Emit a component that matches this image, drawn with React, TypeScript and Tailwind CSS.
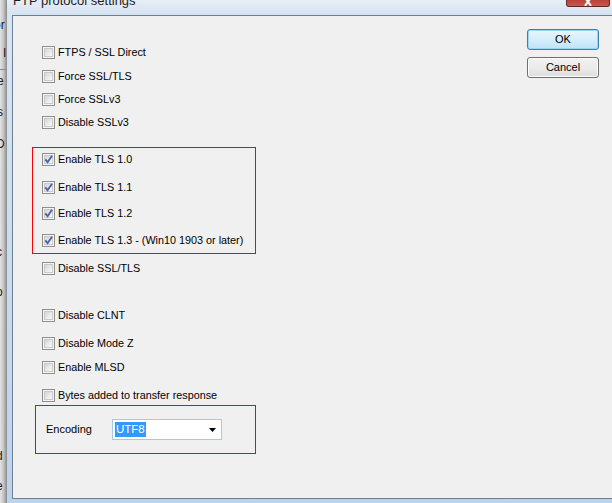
import React from "react";

type Opt = { label: string; checked?: boolean; mt: string };

const topOpts: Opt[] = [
  { label: "FTPS / SSL Direct", mt: "mt-[30px]" },
  { label: "Force SSL/TLS", mt: "mt-[11px]" },
  { label: "Force SSLv3", mt: "mt-[10px]" },
  { label: "Disable SSLv3", mt: "mt-[10px]" },
];

const tlsOpts: Opt[] = [
  { label: "Enable TLS 1.0", checked: true, mt: "mt-[5px]" },
  { label: "Enable TLS 1.1", checked: true, mt: "mt-[15px]" },
  { label: "Enable TLS 1.2", checked: true, mt: "mt-[13px]" },
  { label: "Enable TLS 1.3 - (Win10 1903 or later)", checked: true, mt: "mt-[14px]" },
];

const lowerOpts: Opt[] = [
  { label: "Disable SSL/TLS", mt: "mt-[8px]" },
  { label: "Disable CLNT", mt: "mt-[34px]" },
  { label: "Disable Mode Z", mt: "mt-[15px]" },
  { label: "Enable MLSD", mt: "mt-[11px]" },
  { label: "Bytes added to transfer response", mt: "mt-[15px]" },
];

const CheckBox = ({ checked }: { checked?: boolean }) => (
  <div className="w-[13px] h-[13px] border border-[#8e8f8f] bg-[#f4f4f4] p-px shrink-0">
    <div className="relative w-full h-full border border-[#c9c9c9] bg-gradient-to-br from-[#d6d6d6] to-[#fbfbfb]">
      {checked && (
        <svg className="absolute -left-px -top-px" width="9" height="9" viewBox="0 0 9 9">
          <path d="M1.3 4.4 L3.6 7.2 L8 0.8" fill="none" stroke="#4b64a9" strokeWidth="1.9" />
        </svg>
      )}
    </div>
  </div>
);

const Row = ({ opt }: { opt: Opt }) => (
  <div className={`flex items-center h-[13px] ${opt.mt}`}>
    <CheckBox checked={opt.checked} />
    <span className="ml-[3px] whitespace-nowrap leading-none">{opt.label}</span>
  </div>
);

const WinButton = ({ label, primary }: { label: string; primary?: boolean }) => (
  <div
    className={
      primary
        ? "w-[72px] h-[21px] rounded-[3px] border border-[#3c7fb1] bg-gradient-to-b from-[#e9f6fd] via-[#d6eefb] to-[#bfe3f7] shadow-[inset_0_0_0_1px_#97d7f4] flex items-center justify-center text-[11px]"
        : "w-[72px] h-[21px] rounded-[3px] border border-[#707070] bg-gradient-to-b from-[#f2f2f2] via-[#ebebeb] to-[#dddddd] shadow-[inset_0_0_0_1px_#fcfcfc] flex items-center justify-center text-[11px]"
    }
  >
    {label}
  </div>
);

export default function App() {
  return (
    <div className="w-[612px] h-[503px] overflow-hidden flex font-['Liberation_Sans',Arial,sans-serif] text-[10.8px] text-black">
      {/* window behind the dialog */}
      <div className="w-[7px] shrink-0 flex flex-col bg-gradient-to-r from-[#e4e4e4] via-[#c4c4c4] to-[#8a8a8a] overflow-hidden text-[12px] text-[#1a1a2a] leading-none">
        <span className="mt-[19px] -ml-[6px]">or</span>
        <span className="mt-[16px] ml-[3px]">I</span>
        <div className="mt-[10px] h-px bg-[#8c8c8c]" />
        <span className="mt-[5px] -ml-[3px]">e</span>
        <span className="mt-[19px] -ml-[3px]">s</span>
        <span className="mt-[20px] -ml-[4px]">D</span>
        <span className="mt-[96px] -ml-[4px]">c</span>
        <span className="mt-[28px] -ml-[4px]">o</span>
        <span className="mt-[152px] -ml-[4px]">d</span>
        <span className="mt-[18px] -ml-[4px]">e</span>
      </div>

      {/* dialog */}
      <div className="flex-1 flex flex-col bg-gradient-to-b from-[#d9e6f4] to-[#bcd3ec] pl-[5px]">
        <div className="h-[15px] flex items-start overflow-hidden bg-gradient-to-b from-[#e8eef6] to-[#d4e2f1] -ml-[5px] pl-[5px]">
          <span className="-mt-[6px] ml-px text-[13px] leading-[13px] text-[#1e1e1e] whitespace-nowrap">
            FTP protocol settings
          </span>
          <div className="ml-auto mr-[2px] w-[44px] h-[7px] rounded-b-[3px] border border-t-0 border-[#5a2a2a] bg-gradient-to-b from-[#b8423a] to-[#c8574d] flex justify-center overflow-hidden">
            <svg width="12" height="7" viewBox="0 0 12 7">
              <path d="M1 -5 L7 3 M11 -5 L5 3 M3 6 L5 3 M9 6 L7 3" stroke="#f5f5f5" strokeWidth="2.2" fill="none" />
            </svg>
          </div>
        </div>

        <div className="h-[484px] border-l border-t border-b border-[#6e7f94] bg-[#f0f0f0] flex">
          {/* option column */}
          <div className="flex flex-col pl-[19px]">
            <div className="flex flex-col pl-[10px]">
              {topOpts.map((o) => (
                <Row key={o.label} opt={o} />
              ))}
            </div>

            <div className="mt-[18px] w-[224px] h-[107px] border border-[#ff0000] pl-[9px] flex flex-col">
              {tlsOpts.map((o) => (
                <Row key={o.label} opt={o} />
              ))}
            </div>

            <div className="flex flex-col pl-[10px]">
              {lowerOpts.map((o) => (
                <Row key={o.label} opt={o} />
              ))}
            </div>

            <div className="mt-[3px] ml-[3px] w-[221px] h-[49px] border border-[#ff0000] flex items-center pl-[10px]">
              <span className="w-[66px] leading-none text-[11px]">Encoding</span>
              <div className="w-[110px] h-[21px] border border-[#a7c8e6] bg-white flex items-center pl-[2px] pr-[5px]">
                <span className="bg-[#3399ff] text-white px-px h-[15px] flex items-center text-[11.5px]">UTF8</span>
                <svg className="ml-auto" width="7" height="4" viewBox="0 0 7 4">
                  <path d="M0 0 H7 L3.5 4 Z" fill="#000" />
                </svg>
              </div>
            </div>
          </div>

          {/* buttons */}
          <div className="ml-auto mr-[13px] mt-[13px] flex flex-col gap-[7px]">
            <WinButton label="OK" primary />
            <WinButton label="Cancel" />
          </div>
        </div>
      </div>
    </div>
  );
}
